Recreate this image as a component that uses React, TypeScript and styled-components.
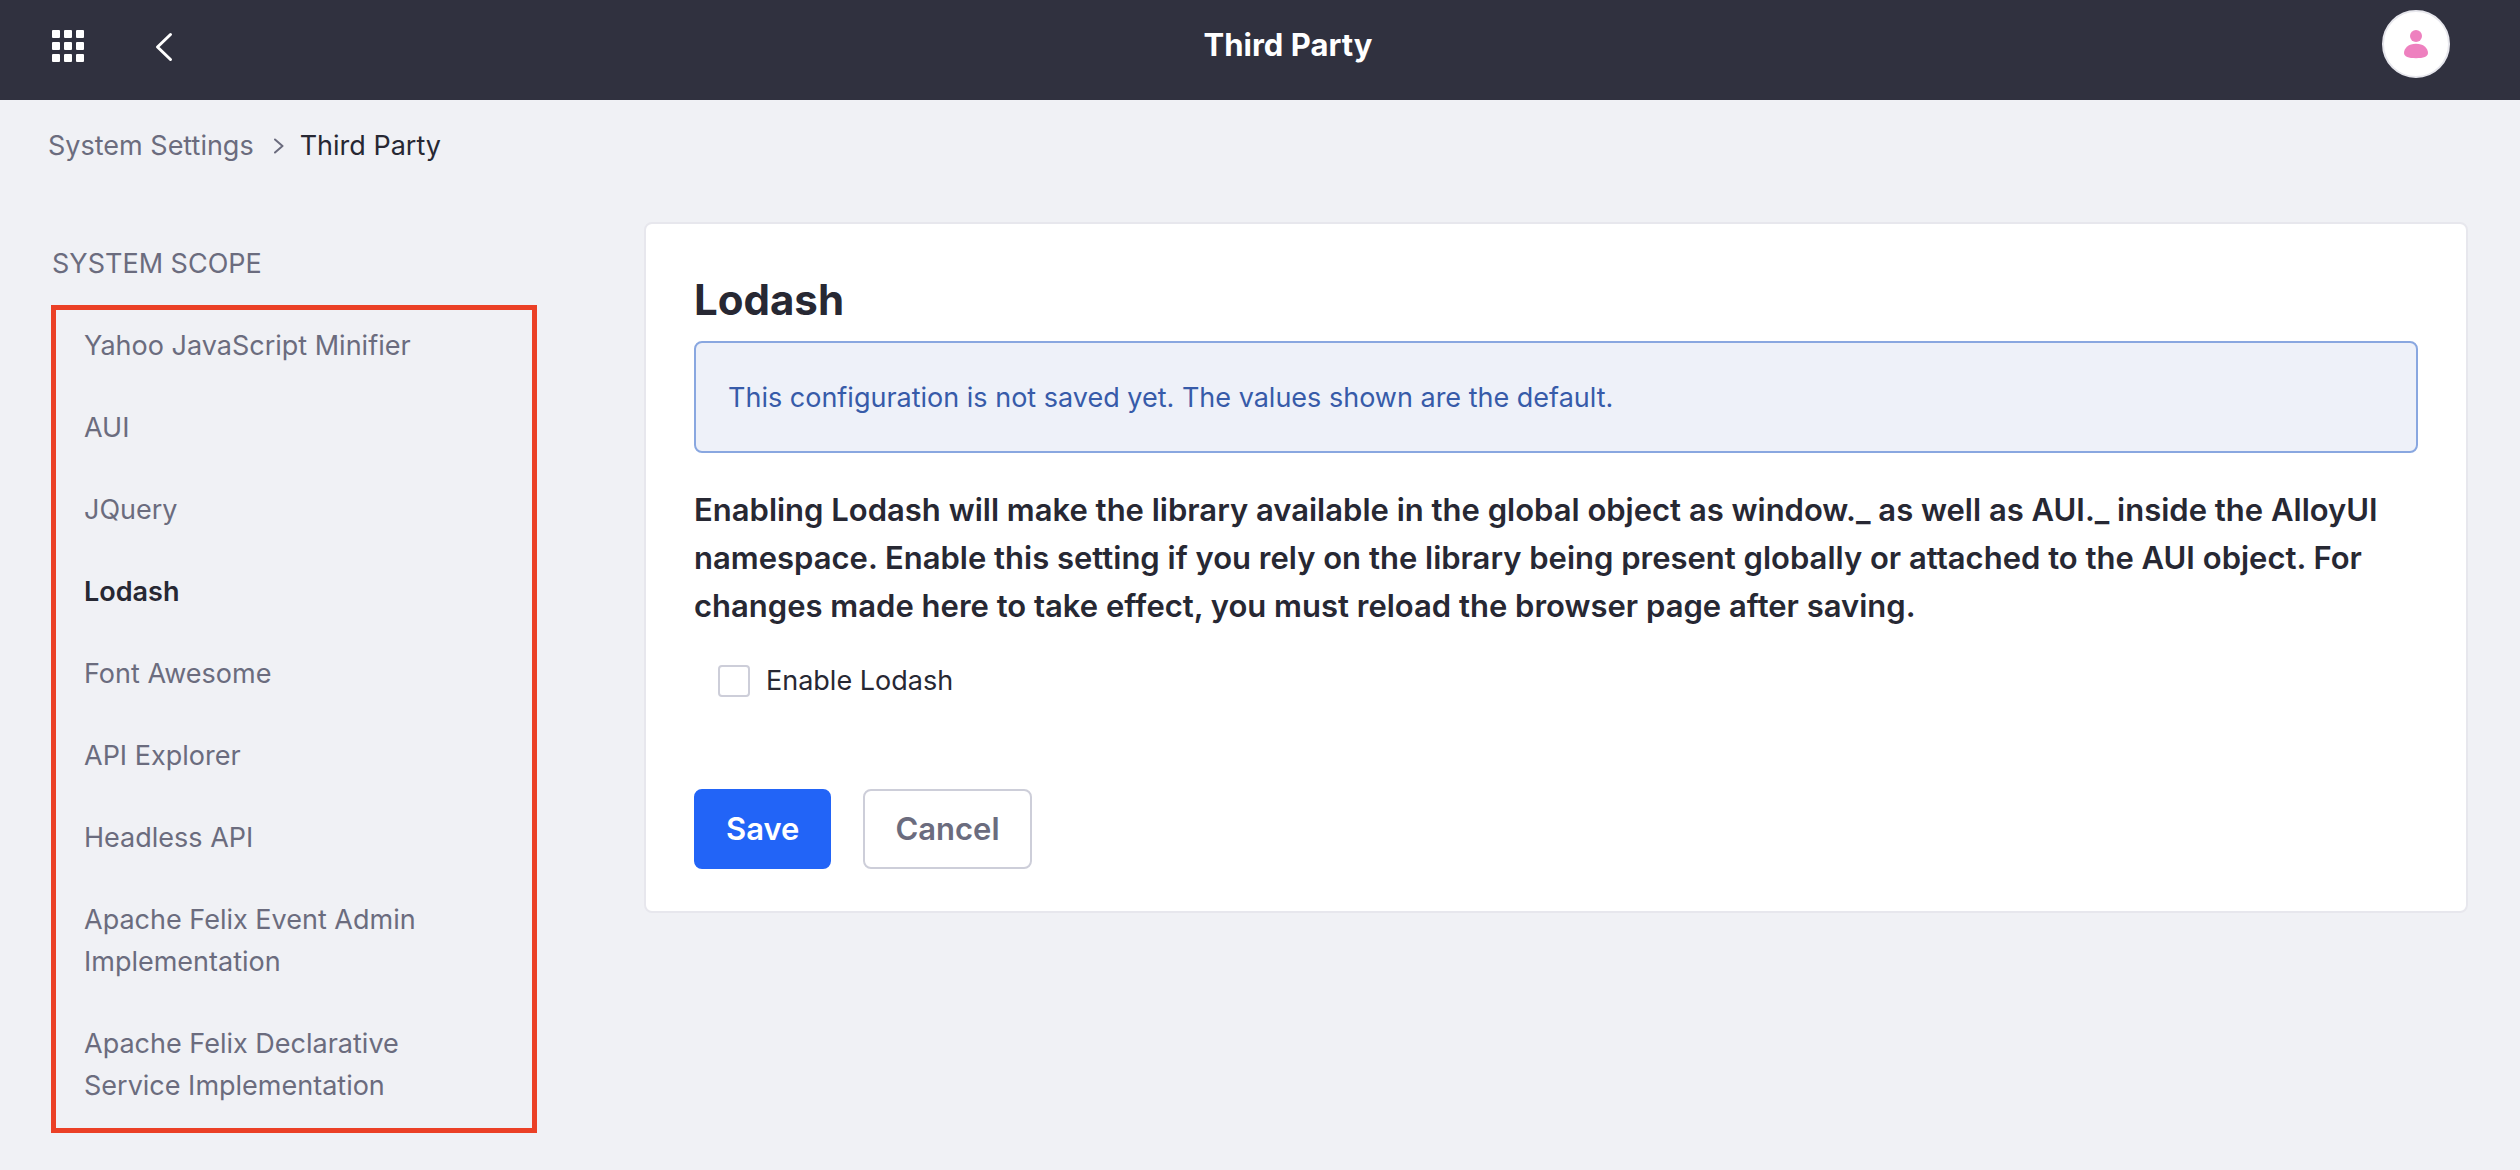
import React, { useState } from "react";
import styled, { createGlobalStyle } from "styled-components";

const colors = {
  header: "#30313f",
  page: "#f0f1f5",
  white: "#ffffff",
  text: "#272833",
  muted: "#6b6c7e",
  border: "#cdced9",
  cardBorder: "#e7e7ed",
  primary: "#2264f7",
  infoBg: "#eef1f9",
  infoBorder: "#89a7e0",
  infoText: "#375ba9",
  highlight: "#eb4026",
  avatar: "#ee80bf",
};

const GlobalStyle = createGlobalStyle`
  *, *::before, *::after { box-sizing: border-box; }
  body {
    margin: 0;
    background: ${colors.page};
    color: ${colors.text};
    font-family: Inter, "Liberation Sans", sans-serif;
    font-size: 27px;
    line-height: 42px;
  }
`;

const Header = styled.header`
  display: flex;
  align-items: center;
  height: 100px;
  padding: 0 70px 10px 38px;
  background: ${colors.header};
  color: ${colors.white};
`;

const HeaderActions = styled.div`
  display: flex;
  gap: 36px;
  padding-top: 2px;
`;

const IconButton = styled.button`
  display: flex;
  align-items: center;
  justify-content: center;
  width: 60px;
  height: 60px;
  padding: 0;
  border: 0;
  background: transparent;
  color: inherit;
  cursor: pointer;
`;

const HeaderTitle = styled.h1`
  flex: 1;
  margin: 0;
  font-size: 31px;
  font-weight: 700;
  line-height: 48px;
  text-align: center;
`;

const Avatar = styled.button`
  display: flex;
  align-items: center;
  justify-content: center;
  width: 68px;
  height: 68px;
  margin-bottom: 2px;
  padding: 0;
  border: 2px solid ${colors.cardBorder};
  border-radius: 50%;
  background: ${colors.white};
  color: ${colors.avatar};
  cursor: pointer;
`;

const Breadcrumb = styled.ol`
  display: flex;
  align-items: center;
  margin: 0;
  padding: 25px 48px 24px;
  list-style: none;
`;

const Crumb = styled.li`
  display: flex;
  align-items: center;
`;

const CrumbLink = styled.a`
  color: ${colors.muted};
  text-decoration: none;
`;

const Separator = styled.svg`
  margin: 0 16px 0 20px;
  color: ${colors.muted};
`;

const Layout = styled.main`
  display: flex;
  align-items: flex-start;
  gap: 107px;
  padding: 31px 52px 36px 51px;
`;

const Sidebar = styled.aside`
  flex: 0 0 486px;
  padding-top: 21px;
`;

const ScopeTitle = styled.h2`
  margin: 0 0 20px;
  padding-left: 1px;
  color: ${colors.muted};
  font-size: 27px;
  font-weight: 400;
  text-transform: uppercase;
`;

const ScopeNav = styled.nav`
  border: 5px solid ${colors.highlight};
  padding: 15px 60px 21px 28px;
`;

const ScopeList = styled.ul`
  display: flex;
  flex-direction: column;
  gap: 40px;
  margin: 0;
  padding: 0;
  list-style: none;
`;

const ScopeLink = styled.a<{ $active: boolean }>`
  display: block;
  color: ${(p) => (p.$active ? colors.text : colors.muted)};
  font-weight: ${(p) => (p.$active ? 600 : 400)};
  text-decoration: none;
`;

const Card = styled.form`
  flex: 1;
  min-width: 0;
  padding: 48px 48px 42px;
  border: 2px solid ${colors.cardBorder};
  border-radius: 8px;
  background: ${colors.white};
`;

const CardTitle = styled.h2`
  margin: 0 0 13px;
  font-size: 42px;
  font-weight: 700;
  line-height: 56px;
`;

const InfoAlert = styled.div`
  padding: 34px 32px 32px;
  border: 2px solid ${colors.infoBorder};
  border-radius: 8px;
  background: ${colors.infoBg};
  color: ${colors.infoText};
`;

const Description = styled.p`
  margin: 33px 0 30px;
  font-size: 31px;
  font-weight: 600;
  line-height: 48px;
`;

const CheckLabel = styled.label`
  display: flex;
  align-items: center;
  gap: 16px;
  width: fit-content;
  margin-left: 24px;
  cursor: pointer;
`;

const CheckBox = styled.input`
  appearance: none;
  display: grid;
  place-content: center;
  width: 32px;
  height: 32px;
  margin: 0;
  border: 2px solid ${colors.border};
  border-radius: 4px;
  background: ${colors.white};
  cursor: pointer;

  &:checked {
    border-color: ${colors.primary};
    background: ${colors.primary};
  }

  &:checked::after {
    content: "";
    width: 8px;
    height: 16px;
    border: solid ${colors.white};
    border-width: 0 3px 3px 0;
    transform: rotate(45deg);
  }
`;

const Actions = styled.div`
  display: flex;
  gap: 32px;
  margin-top: 87px;
`;

const Button = styled.button<{ $primary?: boolean }>`
  height: 80px;
  padding: 0 30px;
  border: 2px solid ${(p) => (p.$primary ? colors.primary : colors.border)};
  border-radius: 8px;
  background: ${(p) => (p.$primary ? colors.primary : colors.white)};
  color: ${(p) => (p.$primary ? colors.white : colors.muted)};
  font-family: inherit;
  font-size: 31px;
  font-weight: 600;
  line-height: 48px;
  cursor: pointer;
`;

const scopes = [
  "Yahoo JavaScript Minifier",
  "AUI",
  "JQuery",
  "Lodash",
  "Font Awesome",
  "API Explorer",
  "Headless API",
  "Apache Felix Event Admin Implementation",
  "Apache Felix Declarative Service Implementation",
];

const gridSteps = [0, 12, 24];

function AppsIcon() {
  return (
    <svg width="32" height="32" viewBox="0 0 32 32" fill="currentColor" aria-hidden="true">
      {gridSteps.map((y) =>
        gridSteps.map((x) => <rect key={`${x}-${y}`} x={x} y={y} width="8" height="8" rx="1" />)
      )}
    </svg>
  );
}

function BackIcon() {
  return (
    <svg width="32" height="32" viewBox="0 0 32 32" fill="none" stroke="currentColor" strokeWidth="3" strokeLinecap="round" strokeLinejoin="round" aria-hidden="true">
      <path d="M22.500 4.500 9.500 17l13 12.500" />
    </svg>
  );
}

function UserIcon() {
  return (
    <svg width="32" height="32" viewBox="0 0 32 32" fill="currentColor" aria-hidden="true">
      <circle cx="16" cy="8" r="6" />
      <path d="M16 15.700C8.600 15.700 4 20 4 25c0 3.600 4.500 5.200 12 5.200S28 28.600 28 25c0-5-4.600-9.300-12-9.300z" />
    </svg>
  );
}

export default function App() {
  const [enabled, setEnabled] = useState(false);

  return (
    <>
      <GlobalStyle />
      <Header>
        <HeaderActions>
          <IconButton type="button" aria-label="Applications">
            <AppsIcon />
          </IconButton>
          <IconButton type="button" aria-label="Back">
            <BackIcon />
          </IconButton>
        </HeaderActions>
        <HeaderTitle>Third Party</HeaderTitle>
        <Avatar type="button" aria-label="User profile">
          <UserIcon />
        </Avatar>
      </Header>

      <nav aria-label="Breadcrumb">
        <Breadcrumb>
          <Crumb>
            <CrumbLink href="#system-settings">System Settings</CrumbLink>
            <Separator width="10" height="16" viewBox="0 0 10 16" fill="none" stroke="currentColor" strokeWidth="2" strokeLinecap="round" strokeLinejoin="round" aria-hidden="true">
              <path d="M1 1.500 8.500 8 1 14.500" />
            </Separator>
          </Crumb>
          <Crumb aria-current="page">Third Party</Crumb>
        </Breadcrumb>
      </nav>

      <Layout>
        <Sidebar>
          <ScopeTitle>System Scope</ScopeTitle>
          <ScopeNav aria-label="System Scope">
            <ScopeList>
              {scopes.map((name) => (
                <li key={name}>
                  <ScopeLink href="#" $active={name === "Lodash"}>
                    {name}
                  </ScopeLink>
                </li>
              ))}
            </ScopeList>
          </ScopeNav>
        </Sidebar>

        <Card onSubmit={(e) => e.preventDefault()}>
          <CardTitle>Lodash</CardTitle>
          <InfoAlert role="status">
            This configuration is not saved yet. The values shown are the default.
          </InfoAlert>
          <Description>
            Enabling Lodash will make the library available in the global object as window._ as
            well as AUI._ inside the AlloyUI namespace. Enable this setting if you rely on the
            library being present globally or attached to the AUI object. For changes made here to
            take effect, you must reload the browser page after saving.
          </Description>
          <CheckLabel htmlFor="enable-lodash">
            <CheckBox
              id="enable-lodash"
              type="checkbox"
              checked={enabled}
              onChange={(e) => setEnabled(e.target.checked)}
            />
            Enable Lodash
          </CheckLabel>
          <Actions>
            <Button type="submit" $primary>
              Save
            </Button>
            <Button type="button">Cancel</Button>
          </Actions>
        </Card>
      </Layout>
    </>
  );
}
